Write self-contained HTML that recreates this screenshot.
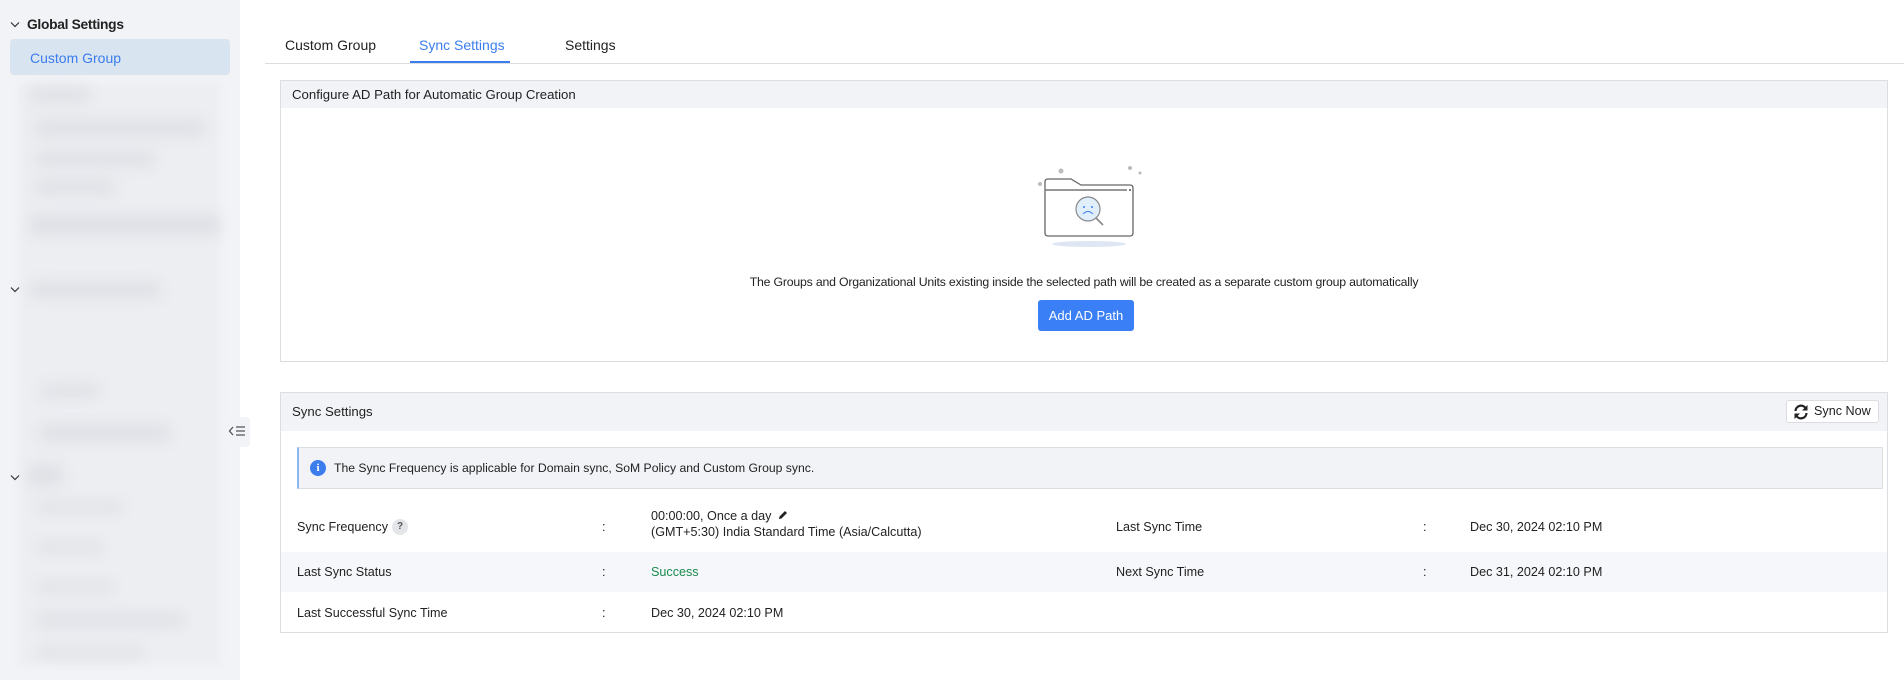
<!DOCTYPE html>
<html><head><meta charset="utf-8"><style>
*{box-sizing:border-box;margin:0;padding:0}
body{width:1904px;height:680px;background:#fff;font-family:"Liberation Sans",sans-serif;color:#222;font-size:12.6px;position:relative;overflow:hidden}
.abs{position:absolute}
.side{left:0;top:0;width:240px;height:680px;background:#f2f3f7}
.blur{position:absolute;background:#dfe0e5;border-radius:6px;filter:blur(7px)}
.tab{position:absolute;top:37px;font-size:14px;white-space:nowrap}
.panel{position:absolute;left:280px;width:1608px;border:1px solid #dcdde2;background:#fff}
.ph{background:#f2f3f7;height:27px;line-height:27px;padding-left:11px;font-size:13.2px}
.lbl{position:absolute;white-space:nowrap}
</style></head><body>
<div class="abs side"></div>
<svg class="abs" style="left:10px;top:21px" width="10" height="8"><path d="M1 1.5 L5 5.5 L9 1.5" fill="none" stroke="#333" stroke-width="1.2"/></svg>
<div class="abs" style="left:27px;top:17px;font-size:13.8px;color:#222;font-weight:bold;letter-spacing:-0.3px">Global Settings</div>
<div class="abs" style="left:10px;top:39px;width:220px;height:36px;background:#d9e4f1;border-radius:4px"></div>
<div class="abs" style="left:30px;top:50px;font-size:14px;color:#3b7ded">Custom Group</div>
<div class="abs" style="left:19px;top:83px;width:201px;height:582px;background:#eceef2;filter:blur(3px)"></div>
<div class="blur" style="left:30px;top:88px;width:60px;height:14px"></div>
<div class="blur" style="left:35px;top:120px;width:170px;height:16px"></div>
<div class="blur" style="left:35px;top:152px;width:120px;height:14px"></div>
<div class="blur" style="left:35px;top:180px;width:80px;height:14px"></div>
<div class="blur" style="left:30px;top:215px;width:190px;height:20px"></div>
<svg class="abs" style="left:10px;top:286px" width="10" height="8"><path d="M1 1.5 L5 5.5 L9 1.5" fill="none" stroke="#333" stroke-width="1.2"/></svg>
<div class="blur" style="left:30px;top:282px;width:130px;height:16px"></div>
<div class="blur" style="left:40px;top:385px;width:60px;height:12px"></div>
<div class="blur" style="left:40px;top:425px;width:130px;height:16px"></div>
<svg class="abs" style="left:10px;top:474px" width="10" height="8"><path d="M1 1.5 L5 5.5 L9 1.5" fill="none" stroke="#333" stroke-width="1.2"/></svg>
<div class="blur" style="left:28px;top:465px;width:35px;height:20px"></div>
<div class="blur" style="left:35px;top:500px;width:90px;height:14px;opacity:.7"></div>
<div class="blur" style="left:35px;top:540px;width:70px;height:14px;opacity:.7"></div>
<div class="blur" style="left:35px;top:580px;width:80px;height:14px;opacity:.7"></div>
<div class="blur" style="left:35px;top:612px;width:150px;height:16px;opacity:.8"></div>
<div class="blur" style="left:35px;top:645px;width:110px;height:14px;opacity:.7"></div>
<div class="abs" style="left:225px;top:417px;width:25px;height:30px;background:#f2f3f7;border-radius:4px"></div>
<svg class="abs" style="left:228px;top:424px" width="18" height="14"><path d="M5 3 L1.5 7 L5 11" fill="none" stroke="#555" stroke-width="1.3"/><path d="M8 3H17M8 7H17M8 11H17" stroke="#555" stroke-width="1.3"/></svg>

<div class="tab" style="left:285px">Custom Group</div>
<div class="tab" style="left:419px;color:#3b7ded">Sync Settings</div>
<div class="tab" style="left:565px">Settings</div>
<div class="abs" style="left:265px;top:63px;width:1639px;height:1px;background:#dcdde2"></div>
<div class="abs" style="left:410px;top:61px;width:100px;height:2px;background:#3b7ded"></div>

<div class="panel" style="top:80px;height:282px">
 <div class="ph">Configure AD Path for Automatic Group Creation</div>
 <svg class="abs" style="left:754px;top:82px" width="110" height="84" viewBox="0 0 110 84">
  <path d="M10 19 V70 Q10 73 13 73 H95 Q98 73 98 70 V25 Q98 22 95 22 H46 L36 16 H13 Q10 16 10 19Z" fill="#fff" stroke="#666" stroke-width="1.3"/>
  <path d="M10 27 H92" stroke="#777" stroke-width="1.6"/><circle cx="95" cy="27" r="1" fill="#555"/>
  <circle cx="53" cy="46" r="12" fill="#e1effd" stroke="#888" stroke-width="1.2"/>
  <path d="M61 55 L68 62" stroke="#888" stroke-width="1.6"/>
  <path d="M48 51 Q53 46 58 51" fill="none" stroke="#3b7ded" stroke-width="1"/>
  <circle cx="49" cy="44" r="1" fill="#3b7ded"/><circle cx="57" cy="44" r="1" fill="#3b7ded"/>
  <ellipse cx="54" cy="81" rx="37" ry="3" fill="#dde6f2"/>
  <circle cx="5" cy="21" r="2" fill="#bbb"/><circle cx="105" cy="10" r="1.5" fill="#bbb"/><circle cx="26" cy="8" r="2.5" fill="#bbb"/><circle cx="95" cy="5" r="2" fill="#bbb"/>
 </svg>
 <div class="abs" style="left:0;width:100%;top:194px;text-align:center;font-size:12.3px;color:#222;letter-spacing:-0.2px">The Groups and Organizational Units existing inside the selected path will be created as a separate custom group automatically</div>
 <div class="abs" style="left:757px;top:219px;width:96px;height:31px;background:#3a7ff6;border-radius:3px;color:#fff;font-size:13px;line-height:31px;text-align:center">Add AD Path</div>
</div>

<div class="panel" style="top:392px;height:241px">
 <div class="ph" style="height:38px;line-height:38px">Sync Settings</div>
 <div class="abs" style="left:1505px;top:7px;width:93px;height:23px;border:1px solid #dcdde2;border-radius:3px;background:#fff;font-size:12.6px;line-height:21px;padding-left:27px">Sync Now</div>
 <svg class="abs" style="left:1512px;top:11px" width="16" height="16" viewBox="0 0 16 16"><path d="M2.5 7 A5.5 5.5 0 0 1 12.5 4" fill="none" stroke="#222" stroke-width="2.2"/><path d="M14.5 1 V6.5 H9Z" fill="#222"/><path d="M13.5 9 A5.5 5.5 0 0 1 3.5 12" fill="none" stroke="#222" stroke-width="2.2"/><path d="M1.5 15 V9.5 H7Z" fill="#222"/></svg>
 <div class="abs" style="left:16px;top:54px;width:1586px;height:42px;background:#f2f3f7;border:1px solid #dcdde2;border-left:2px solid #8bb7f0"></div>
 <div class="abs" style="left:29px;top:67px;width:16px;height:16px;border-radius:50%;background:#3b7ded;color:#fff;font-size:11px;font-weight:bold;text-align:center;line-height:16px;font-family:'Liberation Serif',serif">i</div>
 <div class="lbl" style="left:53px;top:68px;font-size:12.2px">The Sync Frequency is applicable for Domain sync, SoM Policy and Custom Group sync.</div>
 <div class="abs" style="left:0;top:159px;width:100%;height:40px;background:#f6f7fa"></div>
 <div class="lbl" style="left:16px;top:127px">Sync Frequency</div>
 <div class="abs" style="left:111px;top:126px;width:16px;height:16px;border-radius:50%;background:#e4e5e8;color:#555;font-size:10px;font-weight:bold;text-align:center;line-height:16px">?</div>
 <div class="lbl" style="left:321px;top:127px">:</div>
 <div class="lbl" style="left:370px;top:116px">00:00:00, Once a day</div>
 <svg class="abs" style="left:496px;top:116px" width="12" height="12"><path d="M2 10 L2.5 7.5 L8 2 L10 4 L4.5 9.5Z" fill="#222"/></svg>
 <div class="lbl" style="left:370px;top:132px">(GMT+5:30) India Standard Time (Asia/Calcutta)</div>
 <div class="lbl" style="left:835px;top:127px">Last Sync Time</div>
 <div class="lbl" style="left:1142px;top:127px">:</div>
 <div class="lbl" style="left:1189px;top:127px">Dec 30, 2024 02:10 PM</div>
 <div class="lbl" style="left:16px;top:172px">Last Sync Status</div>
 <div class="lbl" style="left:321px;top:172px">:</div>
 <div class="lbl" style="left:370px;top:172px;color:#1a8a4e">Success</div>
 <div class="lbl" style="left:835px;top:172px">Next Sync Time</div>
 <div class="lbl" style="left:1142px;top:172px">:</div>
 <div class="lbl" style="left:1189px;top:172px">Dec 31, 2024 02:10 PM</div>
 <div class="lbl" style="left:16px;top:213px">Last Successful Sync Time</div>
 <div class="lbl" style="left:321px;top:213px">:</div>
 <div class="lbl" style="left:370px;top:213px">Dec 30, 2024 02:10 PM</div>
</div>
</body></html>
